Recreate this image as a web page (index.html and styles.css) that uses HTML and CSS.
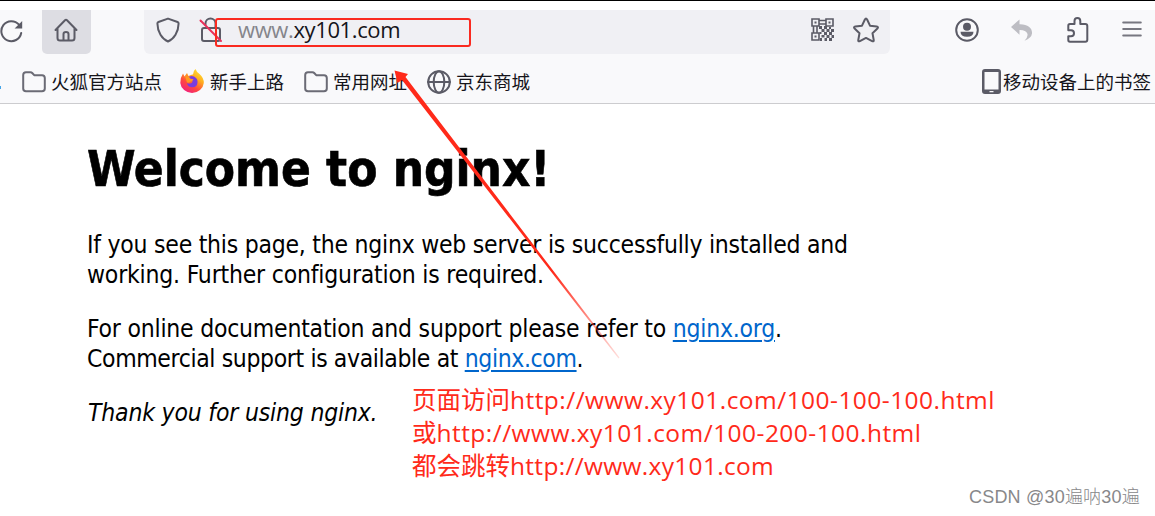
FILE: index.html
```
<!DOCTYPE html>
<html lang="zh-CN">
<head>
    <meta charset="utf-8" />
    <title>Welcome to nginx!</title>
    <link rel="stylesheet" href="styles.css">
</head>
<body>
    <header class="navegador">
        <div class="barra">
            <svg class="icono recargar" width="24" height="24" viewBox="0 0 24 24">
                <path d="M19 5.7A10 10 0 1 0 21.2 14" />
                <path class="relleno" d="M22.2 2v7.6h-7.6z" />
            </svg>
            <div class="inicio">
                <svg class="icono" width="24" height="24" viewBox="0 0 24 24">
                    <path d="M1.5 12 11 2.3q1-1 2 0L22.500 12M3.500 10v10q0 2.500 2.500 2.500h12q2.500 0 2.500-2.500V10M9.500 22v-6q0-2 2.500-2t2.500 2v6" />
                </svg>
            </div>
            <div class="direccion">
                <svg class="icono escudo" width="24" height="26" viewBox="0 0 24 26">
                    <path d="M12 1.600 21.600 5q1 .4 1 1.500C22.500 15 18 22 12 24.500 6 22 1.500 15 1.400 6.500q0-1.100 1-1.500z" />
                </svg>
                <svg class="icono candado" width="24" height="26" viewBox="0 0 24 26">
                    <path d="M6.500 8V6.500a5 5 0 0 1 10 0V11M5 11h14q2 0 2 2v9q0 2-2 2H5q-2 0-2-2v-9q0-2 2-2z" />
                    <path class="tachado" d="M1.500 3.500 22 24" />
                </svg>
                <div class="url"><span>www.</span>xy101.com</div>
                <svg class="qr" width="23" height="23" viewBox="0 0 23 23">
                    <path class="icono" d="M1 1h7v7H1zM15 1h7v7h-7zM1 15h7v7H1zM9 2.500h5M9 6h5M2.500 9v5M6 9v5" />
                    <path class="relleno" d="M3.500 3.500h2v2h-2zM17.500 3.500h2v2h-2zM3.500 17.500h2v2h-2zM8 8h3v3H8zM13 8h3v3h-3zM18 9h2v2h-2zM10.500 11h3v3h-3zM15.500 11h3v3h-3zM20 11h3v3h-3zM8.500 14h2v2h-2zM13 14h3v3h-3zM18 14h3v3h-3zM10.500 17h3v2.500h-3zM15.500 17h3v3h-3zM20.500 17H23v3h-2.500zM9 20h2v3H9zM13.500 20h2.500v3h-2.500zM18 20h3v3h-3z" />
                </svg>
                <svg class="icono estrella" width="26" height="26" viewBox="0 0 26 26">
                    <path d="M11.900 2.500q1.100-2 2.200 0l2.900 6.200 6.700.9q2.100.4.700 1.900l-4.900 4.700 1.200 6.700q.3 2.100-1.600 1.200L13 20.900l-6.100 3.200q-1.900.9-1.600-1.200l1.200-6.700-4.900-4.700q-1.400-1.500.7-1.900l6.700-.9z" />
                </svg>
            </div>
            <div class="acciones">
                <svg width="24" height="24" viewBox="0 0 24 24">
                    <circle class="icono" cx="12" cy="12" r="10.800" />
                    <circle class="relleno" cx="12" cy="8.700" r="4" />
                    <path class="relleno" d="M5.500 13.700h13q0 5-6.500 5t-6.500-5z" />
                </svg>
                <svg width="22" height="22" viewBox="0 0 22 22">
                    <path class="deshacer" d="M0 8 8.500.5v4.700C17 5 21.500 9 21 14.500q-.5 4.500-7.500 7.200 4-4 2.800-7.200-1.500-3.700-7.800-3.500v4.700z" />
                </svg>
                <svg class="icono" width="22" height="26" viewBox="0 0 22 26">
                    <path d="M3 24.700q-1.700 0-1.700-1.700v-3.800H4a3 3 0 0 0 0-6H1.300V8.700q0-1.700 1.700-1.700h4.500V4a2.900 2.900 0 0 1 5.800 0v3h5q2 0 2 2v13.700q0 2-2 2z" />
                </svg>
                <svg class="menu" width="20" height="18" viewBox="0 0 20 18">
                    <path d="M1.200 2.500h17.600M1.200 9h17.600M1.200 15.500h17.600" />
                </svg>
            </div>
        </div>
        <nav class="marcadores">
            <i class="resto"></i>
            <svg class="icono carpeta" width="24" height="22" viewBox="0 0 24 22">
                <path d="M4 1.200h4.500q1 0 1.700.8l2 2.200H20q2.800 0 2.800 2.800v10.500q0 2.800-2.800 2.800H4q-2.800 0-2.800-2.800V4q0-2.800 2.800-2.800z" />
            </svg>
            <span class="m1">火狐官方站点</span>
            <svg class="zorro" width="24" height="25" viewBox="0 0 24 25">
                <defs>
                    <linearGradient id="fuego" x1=".85" y1="0" x2=".2" y2="1">
                        <stop offset="0" stop-color="#ffe936" />
                        <stop offset=".35" stop-color="#ffad1f" />
                        <stop offset=".65" stop-color="#ff4a3d" />
                        <stop offset="1" stop-color="#f01888" />
                    </linearGradient>
                </defs>
                <path fill="url(#fuego)" d="M15.500 0q1 3 4 5 4.500 4 4.300 9A11.800 11 0 0 1 .3 14Q0 9 3 4.500l1.500 3L7 4l1.500 3Q12 5 13 5.500 13 2 15.500 0z" />
                <path fill="#7a3ce0" d="M8 8.500q2.500-2.500 6-1 4 2 3.500 6a5.300 5.300 0 0 1-10.500.5q2 1.500 4.500 0 2-1.500 0-2.500-3.500 0-3.500-3z" />
                <path fill="#ff9a1f" d="M5 7q4 0 5.500 2.800l3 .4q-.5 2-3 2.300Q10 14 7 13.500z" />
            </svg>
            <span class="m2">新手上路</span>
            <svg class="icono carpeta" width="24" height="22" viewBox="0 0 24 22">
                <path d="M4 1.200h4.500q1 0 1.700.8l2 2.200H20q2.800 0 2.800 2.800v10.500q0 2.800-2.800 2.800H4q-2.800 0-2.800-2.800V4q0-2.800 2.800-2.800z" />
            </svg>
            <span class="m3">常用网址</span>
            <svg class="icono globo" width="24" height="24" viewBox="0 0 24 24">
                <circle cx="12" cy="12" r="10.800" />
                <ellipse cx="12" cy="12" rx="5.300" ry="10.800" />
                <path d="M1 12h22" />
            </svg>
            <span>京东商城</span>
            <svg class="movil" width="19" height="25" viewBox="0 0 19 25">
                <path fill-rule="evenodd" d="M3 0h13q3 0 3 3v19q0 3-3 3H3q-3 0-3-3V3q0-3 3-3zM2.500 3v17.500h14V3zM7.500 22v1.200h4V22z" />
            </svg>
            <span class="m5">移动设备上的书签</span>
        </nav>
    </header>

    <main class="pagina">
        <h1>Welcome to nginx!</h1>
        <p><span class="l1">If you see this page, the nginx web server is successfully installed and</span><br />
        <span class="l2">working. Further configuration is required.</span></p>
        <p><span class="l3">For online documentation and support please refer to <a href="#">nginx.org</a>.</span><br />
        <span class="l4">Commercial support is available at <a href="#">nginx.com</a>.</span></p>
        <p><em>Thank you for using nginx.</em></p>
    </main>

    <!-- notas encima de la captura -->
    <div class="recuadro"></div>
    <svg class="flecha" width="1155" height="516" viewBox="0 0 1155 516">
        <defs>
            <linearGradient id="rojo" gradientUnits="userSpaceOnUse" x1="395" y1="71" x2="619" y2="358">
                <stop offset=".7" stop-color="#ff2a1a" />
                <stop offset="1" stop-color="#ff2a1a" stop-opacity=".15" />
            </linearGradient>
        </defs>
        <path fill="url(#rojo)" d="M394.500 70.500 408 74l-2.500 3L619.500 357.600 618.500 358.400 402 80 397.500 83z" />
    </svg>
    <div class="nota">
        <div class="n1">页面访问<span>http://www.xy101.com/100-100-100.html</span></div>
        <div class="n2">或<span>http://www.xy101.com/100-200-100.html</span></div>
        <div class="n3">都会跳转<span>http://www.xy101.com</span></div>
    </div>
    <div class="marca">CSDN @30遍呐30遍</div>
</body>
</html>
```
FILE: styles.css
```
*
{
    box-sizing: border-box;
    margin: 0;
    padding: 0;
}

body
{
    width: 1155px;
    height: 516px;
    overflow: hidden;
    position: relative;
    background: white;
    border-top: 1px solid black;
    color: black;
    font-family: "DejaVu Sans Condensed", "DejaVu Sans", sans-serif;
    font-stretch: condensed;
}

svg
{
    display: block;
    flex: none;
}

.icono
{
    fill: none;
    stroke: #5b5b66;
    stroke-width: 2;
    stroke-linejoin: round;
    stroke-linecap: round;
}

.relleno
{
    fill: #5b5b66;
    stroke: none;
}

.navegador
{
    margin-top: 9px;
    height: 94px;
    background: #f9f9fb;
    border-bottom: 1px solid #cccccf;
    font-family: "Noto Sans CJK SC", sans-serif;
}

.barra
{
    display: flex;
    height: 44px;
}

.recargar
{
    margin: 9px 18px 0 0;
}

.inicio
{
    width: 49px;
    height: 44px;
    padding: 8px 12px;
    background: #dddde3;
    border-radius: 0 0 5px 5px;
}

.direccion
{
    display: flex;
    width: 746px;
    height: 44px;
    margin-left: 53px;
    background: #f0f0f4;
    border-radius: 0 0 6px 6px;
}

.escudo
{
    margin: 7px 0 0 12px;
}

.candado
{
    margin: 7px 0 0 19px;
}

.candado .tachado
{
    stroke: #e8305a;
}

.url
{
    flex: 1;
    padding-left: 15px;
    color: #15141a;
    font: 22px/38px "Open Sans", sans-serif;
    letter-spacing: -.38px;
}

.url span
{
    color: #85858b;
}

.qr
{
    margin-top: 8px;
}

.qr .icono
{
    stroke-width: 1.6;
    stroke-linejoin: miter;
}

.estrella
{
    margin: 7px 11px 0 19px;
}

.acciones
{
    display: flex;
    align-items: center;
    height: 40px;
    margin-left: 65px;
}

.acciones svg:nth-child(2)
{
    margin-left: 32px;
}

.acciones svg:nth-child(3)
{
    margin: 0 33px 0 34px;
}

.deshacer
{
    fill: #bdbdc3;
}

.acciones .menu
{
    margin-bottom: 2px;
    stroke: #777780;
    stroke-width: 2;
    stroke-linecap: round;
}

.marcadores
{
    display: flex;
    align-items: center;
    height: 49px;
    padding-top: 6px;
    color: #15141a;
    font-size: 18.5px;
    line-height: 28px;
    white-space: nowrap;
}

.marcadores span
{
    margin-top: -2px;
}

.resto
{
    width: 1px;
    height: 3px;
    margin: 12px 21px 0 0;
    background: #45a5e8;
}

.carpeta
{
    margin-right: 5px;
    stroke: #6b6b75;
}

.m1
{
    width: 129px;
}

.zorro
{
    margin-right: 6px;
}

.m2
{
    width: 94px;
}

.m3
{
    width: 94px;
}

.globo
{
    margin-right: 5px;
}

.movil
{
    margin-left: auto;
    fill: #5b5b66;
}

.m5
{
    margin: 0 4px 0 2px;
}

.pagina
{
    width: 860px;
    margin: 36px 0 0 87px;
    font-size: 24.5px;
    line-height: 29.5px;
    white-space: nowrap;
}

h1
{
    font-size: 49px;
    line-height: 59px;
    letter-spacing: -.05px;
    -webkit-text-stroke: .6px black;
}

p
{
    margin-top: 25px;
}

h1 + p
{
    margin-top: 31px;
}

.l1
{
    letter-spacing: -.24px;
}

.l2
{
    letter-spacing: -.19px;
}

.l3
{
    letter-spacing: -.22px;
}

.l4
{
    letter-spacing: -.37px;
}

em
{
    margin-left: 1px;
    letter-spacing: -.18px;
}

a
{
    color: #0066cc;
    text-decoration-thickness: 2px;
    text-underline-offset: 3px;
}

.recuadro
{
    position: absolute;
    left: 215px;
    top: 17px;
    width: 256px;
    height: 29px;
    border: 2px solid #fa2a20;
    border-radius: 3px;
}

.flecha
{
    position: absolute;
    left: 0;
    top: -1px;
}

.nota
{
    position: absolute;
    left: 412px;
    top: 382px;
    color: #ff2a1a;
    font: 24.5px/33px "Open Sans", "Noto Sans CJK SC", sans-serif;
    white-space: nowrap;
}

.nota span
{
    letter-spacing: .46px;
}

.nota .n3 span
{
    letter-spacing: .3px;
}

.marca
{
    position: absolute;
    left: 969px;
    top: 483px;
    color: #88888a;
    font: 300 18px/26px "Liberation Sans", "Noto Sans CJK SC", sans-serif;
    letter-spacing: .2px;
    white-space: nowrap;
}
```
